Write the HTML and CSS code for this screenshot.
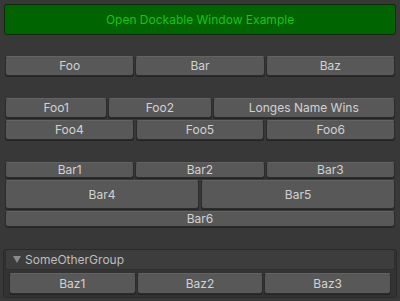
FILE: index.html
```html
<!DOCTYPE html>
<html>
<head>
<meta charset="utf-8">
<link rel="stylesheet" href="styles.css">
</head>
<body>
<div class="page">
  <button class="btn green">Open Dockable Window Example</button>

  <div class="row r3 foo">
    <button class="btn">Foo</button>
    <button class="btn">Bar</button>
    <button class="btn">Baz</button>
  </div>

  <div class="block b2">
    <div class="row longes">
      <button class="btn">Foo1</button>
      <button class="btn">Foo2</button>
      <button class="btn">Longes Name Wins</button>
    </div>
    <div class="row r3 h20">
      <button class="btn">Foo4</button>
      <button class="btn">Foo5</button>
      <button class="btn">Foo6</button>
    </div>
  </div>

  <div class="block b3">
    <div class="row r3 h16">
      <button class="btn">Bar1</button>
      <button class="btn">Bar2</button>
      <button class="btn">Bar3</button>
    </div>
    <div class="row r2 h29">
      <button class="btn">Bar4</button>
      <button class="btn">Bar5</button>
    </div>
    <div class="row r1 h16">
      <button class="btn">Bar6</button>
    </div>
  </div>

  <div class="group">
    <div class="group-head"><span class="tri"></span>SomeOtherGroup</div>
    <div class="group-body">
      <div class="row r3 h21">
        <button class="btn">Baz1</button>
        <button class="btn">Baz2</button>
        <button class="btn">Baz3</button>
      </div>
    </div>
  </div>
</div>
</body>
</html>
```

FILE: styles.css
```css
html, body {
  margin: 0;
  padding: 0;
  background: #383838;
  width: 400px;
  height: 301px;
  overflow: hidden;
}
.page {
  padding: 4px 4px 0 4px;
  display: flex;
  flex-direction: column;
  font-family: Inter, "Noto Sans", sans-serif;
  font-size: 12px;
}
.btn {
  font-family: Inter, "Noto Sans", sans-serif;
  font-size: 12px;
  color: #d2d2d2;
  background: #585858;
  border: 1px solid #2c2c2c;
  border-top-color: #636363;
  border-radius: 3px;
  margin: 0;
  padding: 0;
  box-sizing: border-box;
  height: 100%;
  min-width: 0;
  line-height: 1;
  box-shadow: 0 1px 0 #242424;
}
.green {
  height: 31px;
  width: 392px;
  background: #006400;
  border: 1px solid #0f2a0f;
  color: #19c319;
  box-shadow: none;
  font-size: 12px;
}
.row {
  display: grid;
  column-gap: 1px;
  margin-left: 1px;
  margin-right: 1px;
}
.r3 { grid-template-columns: 1fr 1fr 1fr; }
.r2 { grid-template-columns: 1fr 1fr; column-gap: 2px; }
.r1 { grid-template-columns: 1fr; }
.foo { margin-top: 21px; height: 20px; }
.longes { grid-template-columns: 102fr 103fr 182fr; height: 20px; }
.h16 { height: 16px; }
.h20 { height: 20px; }
.h21 { height: 21px; }
.h29 { height: 29px; }
.block { display: flex; flex-direction: column; row-gap: 2px; }
.b2 { margin-top: 22px; }
.b3 { margin-top: 22px; }
.b2 .r3 { column-gap: 2px; }
.group {
  margin-top: 22px;
  margin-left: -1px;
  margin-right: -1px;
  border: 1px solid #2a2a2a;
  border-radius: 3px;
  background: #333333;
  padding: 0 1px 3px 1px;
}
.group-head {
  height: 19px;
  background: #3d3d3d;
  border: 1px solid #2f2f2f;
  border-top: none;
  margin: 0 0 0 0;
  border-radius: 2px;
  color: #bdbdbd;
  display: flex;
  align-items: center;
  padding-left: 7px;
  box-sizing: border-box;
  height: 20px;
}
.tri {
  width: 0;
  height: 0;
  border-left: 4px solid transparent;
  border-right: 4px solid transparent;
  border-top: 7px solid #8a8a8a;
  margin-right: 4px;
}
.group-body {
  padding: 3px 4px 0 4px;
}
.group-body .row { margin: 0; }
```
